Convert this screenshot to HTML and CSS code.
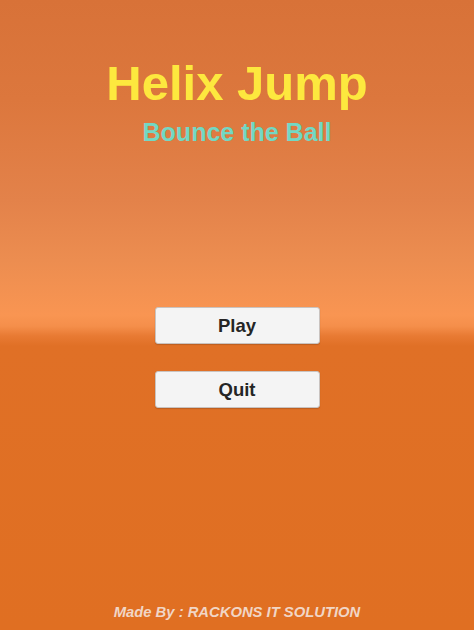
FILE: index.html
```html
<!DOCTYPE html>
<html>
<head>
<meta charset="utf-8">
<link rel="stylesheet" href="styles.css">
</head>
<body>
<main class="screen">
  <h1 class="title">Helix Jump</h1>
  <p class="subtitle">Bounce the Ball</p>
  <div class="menu">
    <button class="btn">Play</button>
    <button class="btn">Quit</button>
  </div>
  <footer class="credit">Made By : RACKONS IT SOLUTION</footer>
</main>
</body>
</html>
```
FILE: styles.css
```css
html, body {
  margin: 0;
  padding: 0;
}
body {
  width: 474px;
  height: 630px;
  overflow: hidden;
  font-family: "Liberation Sans", Arial, sans-serif;
}
.screen {
  height: 630px;
  display: flex;
  flex-direction: column;
  align-items: center;
  background: linear-gradient(to bottom,
    #d87238 0px,
    #dc773d 100px,
    #e3824a 200px,
    #ec8d50 260px,
    #f99552 315px,
    #f58f4b 326px,
    #e87a33 336px,
    #e07026 346px,
    #e06f22 630px);
}
.title {
  margin: 59px 0 0;
  font-size: 49px;
  line-height: 1;
  font-weight: bold;
  color: #fde83e;
}
.subtitle {
  margin: 12px 0 0;
  font-size: 25px;
  line-height: 1;
  font-weight: bold;
  color: #72d8c4;
}
.menu {
  margin-top: 162px;
  display: flex;
  flex-direction: column;
  gap: 27px;
}
.btn {
  width: 165px;
  height: 37px;
  padding: 0;
  background: #f4f4f4;
  border: 1px solid #c9c3c0;
  border-radius: 3px;
  box-shadow: 0 1px 1px rgba(120, 60, 20, 0.35);
  font-family: "Liberation Sans", Arial, sans-serif;
  font-size: 18.5px;
  font-weight: bold;
  color: #252525;
}
.credit {
  margin-top: auto;
  margin-bottom: 10px;
  font-size: 14.8px;
  line-height: 1;
  font-weight: bold;
  font-style: italic;
  color: #f1d6c6;
}
```
